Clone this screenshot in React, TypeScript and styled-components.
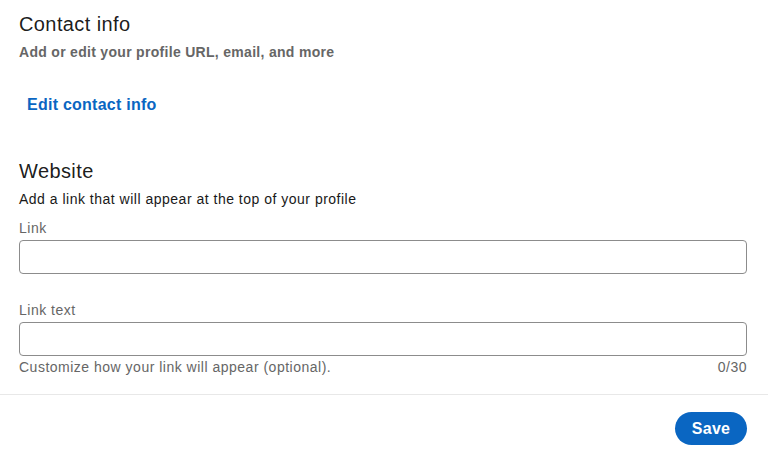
import React from 'react';
import styled, { createGlobalStyle } from 'styled-components';

const GlobalStyle = createGlobalStyle`
  body {
    margin: 0;
    background: #ffffff;
    font-family: "Liberation Sans", Arial, sans-serif;
    color: #191919;
  }
`;

const Page = styled.div`
  width: 768px;
  display: flex;
  flex-direction: column;
`;

const Body = styled.div`
  padding: 12px 21px 0 19px;
  display: flex;
  flex-direction: column;
`;

const Heading = styled.h2<{ $top?: number }>`
  margin: ${(p) => p.$top ?? 0}px 0 0;
  font-size: 20px;
  line-height: 24px;
  font-weight: 400;
  letter-spacing: 0.4px;
  color: rgba(0, 0, 0, 0.9);
`;

const Sub = styled.p<{ $muted?: boolean }>`
  margin: 6px 0 0;
  font-size: 14px;
  line-height: 20px;
  font-weight: ${(p) => (p.$muted ? 600 : 400)};
  letter-spacing: ${(p) => (p.$muted ? 0.3 : 0.5)}px;
  color: ${(p) => (p.$muted ? '#666666' : '#191919')};
`;

const LinkButton = styled.button`
  align-self: flex-start;
  margin: 27px 0 0;
  padding: 6px 8px;
  height: 32px;
  border: none;
  background: none;
  font-family: inherit;
  font-size: 16px;
  line-height: 20px;
  font-weight: 700;
  letter-spacing: 0.25px;
  color: #0a66c2;
  cursor: pointer;
`;

const Field = styled.div<{ $top: number }>`
  display: flex;
  flex-direction: column;
  margin-top: ${(p) => p.$top}px;
`;

const Label = styled.label`
  font-size: 14px;
  line-height: 20px;
  letter-spacing: 0.5px;
  color: #666666;
  margin-bottom: 2px;
`;

const Input = styled.input`
  box-sizing: border-box;
  width: 100%;
  height: 34px;
  border: 1px solid #8c8c8c;
  border-radius: 4px;
  padding: 0 12px;
  font-family: inherit;
  font-size: 14px;
  outline: none;
`;

const Helper = styled.div`
  display: flex;
  justify-content: space-between;
  font-size: 14px;
  line-height: 20px;
  letter-spacing: 0.5px;
  color: #666666;
  margin-top: 1px;
`;

const Divider = styled.hr`
  margin: 17px 0 0;
  border: none;
  border-top: 1px solid #e8e8e8;
  width: 100%;
`;

const Footer = styled.div`
  display: flex;
  justify-content: flex-end;
  padding: 17px 21px 0 0;
`;

const SaveButton = styled.button`
  height: 33px;
  padding: 0 16px;
  min-width: 72px;
  border: none;
  border-radius: 17px;
  background: #0a66c2;
  color: #ffffff;
  font-family: inherit;
  font-size: 16px;
  font-weight: 700;
  letter-spacing: 0.25px;
  cursor: pointer;
`;

export default function App() {
  return (
    <Page>
      <GlobalStyle />
      <Body>
        <Heading>Contact info</Heading>
        <Sub $muted>Add or edit your profile URL, email, and more</Sub>
        <LinkButton>Edit contact info</LinkButton>

        <Heading $top={38}>Website</Heading>
        <Sub>Add a link that will appear at the top of your profile</Sub>

        <Field $top={9}>
          <Label htmlFor="link">Link</Label>
          <Input id="link" />
        </Field>

        <Field $top={26}>
          <Label htmlFor="linktext">Link text</Label>
          <Input id="linktext" />
          <Helper>
            <span>Customize how your link will appear (optional).</span>
            <span>0/30</span>
          </Helper>
        </Field>
      </Body>
      <Divider />
      <Footer>
        <SaveButton>Save</SaveButton>
      </Footer>
    </Page>
  );
}
